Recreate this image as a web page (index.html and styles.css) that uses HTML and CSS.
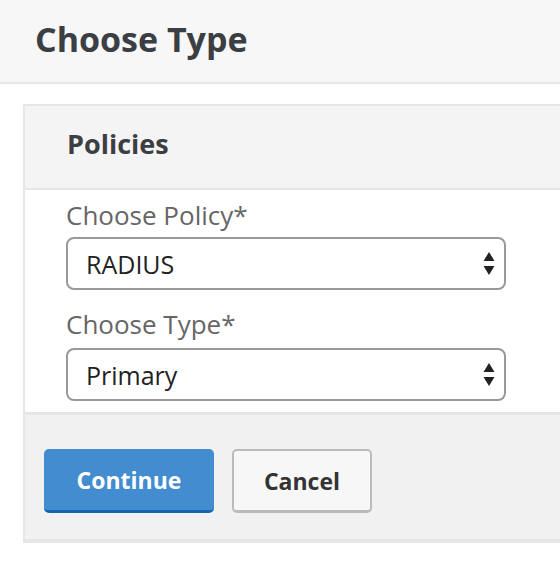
FILE: index.html
```html
<!DOCTYPE html>
<html>
    <head>
        <title>Choose Type</title>
        <link rel="stylesheet" href="styles.css">
    </head>
    <body>
        <header class="pageHeader">
            <h1>Choose Type</h1>
        </header>

        <main>
            <div class="panel">
                <div class="panelHead">Policies</div>

                <div class="panelBody">
                    <label class="fieldLabel">Choose Policy*</label>
                    <div class="selectBox">
                        <span>RADIUS</span>
                        <svg class="arrows" width="12" height="23" viewBox="0 0 12 23">
                            <polygon points="6,0 11.5,9 0.5,9" />
                            <polygon points="0.5,14 11.5,14 6,23" />
                        </svg>
                    </div>

                    <label class="fieldLabel second">Choose Type*</label>
                    <div class="selectBox">
                        <span>Primary</span>
                        <svg class="arrows" width="12" height="23" viewBox="0 0 12 23">
                            <polygon points="6,0 11.5,9 0.5,9" />
                            <polygon points="0.5,14 11.5,14 6,23" />
                        </svg>
                    </div>
                </div>

                <div class="panelFoot">
                    <button class="btn btnPrimary">Continue</button>
                    <button class="btn btnDefault">Cancel</button>
                </div>
            </div>
        </main>
    </body>
</html>
```

FILE: styles.css
```css
body {
    margin: 0;
    font-family: "Open Sans", Arial, sans-serif;
    background-color: white;
    overflow: hidden;
}

/* Header Section */
.pageHeader {
    background-color: #f7f7f7;
    border-bottom: 2px solid #e6e6e6;
    height: 84px;
    box-sizing: border-box;
    padding: 16px 0 0 35px;
}

.pageHeader h1 {
    margin: 0;
    font-size: 34px;
    font-weight: 700;
    line-height: 46px;
    color: #3b3e43;
}

main {
    padding: 20px 0 0 23px;
}

/* Panel */
.panel {
    border-left: 2px solid #e6e6e6;
    border-top: 2px solid #e6e6e6;
}

.panelHead {
    background-color: #f4f4f4;
    border-bottom: 2px solid #e6e6e6;
    height: 84px;
    box-sizing: border-box;
    padding: 19px 0 0 42px;
    font-size: 27px;
    font-weight: 700;
    line-height: 37px;
    color: #3b3e43;
}

.panelBody {
    padding: 8px 0 11px 41px;
    background-color: white;
    border-bottom: 3px solid #e6e6e6;
}

.fieldLabel {
    display: block;
    font-size: 26px;
    line-height: 35px;
    color: #666;
    margin-bottom: 4px;
}

.fieldLabel.second {
    margin-top: 17px;
    margin-bottom: 6px;
}

.selectBox {
    width: 440px;
    height: 53px;
    box-sizing: border-box;
    border: 2px solid #999;
    border-radius: 8px;
    display: flex;
    align-items: center;
    justify-content: space-between;
    padding: 0 9px 0 18px;
    font-size: 25px;
    color: #222;
}

.arrows {
    fill: #222;
}

/* Footer */
.panelFoot {
    background-color: #f1f1f1;
    border-bottom: 4px solid #e6e6e6;
    height: 128px;
    box-sizing: border-box;
    padding: 34px 0 0 19px;
    display: flex;
    align-items: flex-start;
    gap: 18px;
}

.btn {
    height: 64px;
    box-sizing: border-box;
    font-family: "Open Sans", Arial, sans-serif;
    font-size: 23px;
    font-weight: 700;
    border-radius: 5px;
    cursor: pointer;
    padding: 0;
}

.btnPrimary {
    width: 170px;
    background-color: #438ccf;
    color: white;
    border: none;
    border-bottom: 3px solid #1464b4;
}

.btnDefault {
    width: 140px;
    background-color: #f7f7f7;
    color: #333;
    border: 2px solid #bbb;
    border-bottom-width: 3px;
}
```
